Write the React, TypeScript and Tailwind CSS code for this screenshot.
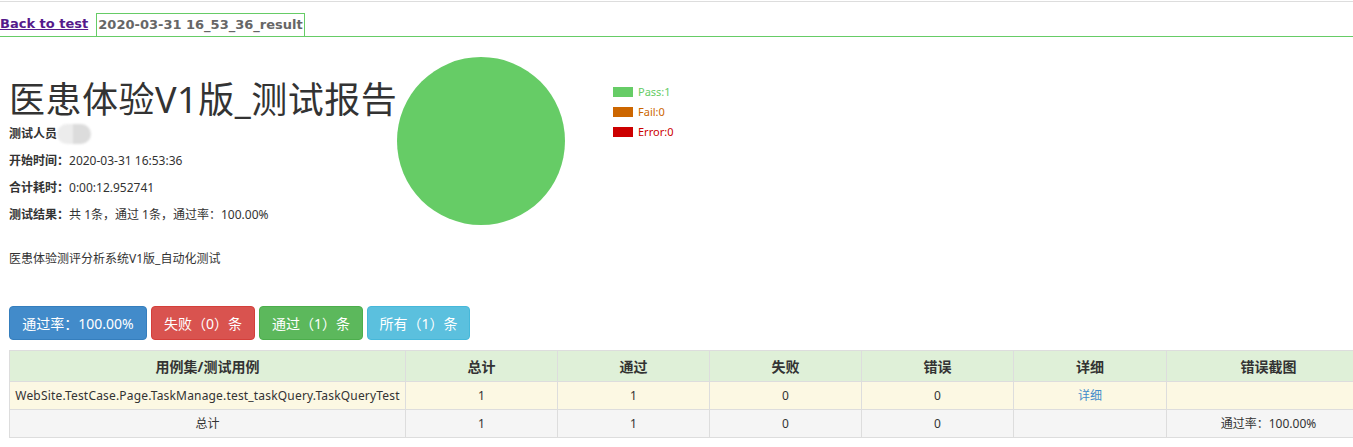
import React from "react";

const F = "font-['Noto_Sans','Noto_Sans_CJK_SC',sans-serif]";

export default function App() {
  const cols = [
    { t: "用例集/测试用例", w: "w-[396px]" },
    { t: "总计", w: "w-[152px]" },
    { t: "通过", w: "w-[152px]" },
    { t: "失败", w: "w-[152px]" },
    { t: "错误", w: "w-[152px]" },
    { t: "详细", w: "w-[153px]" },
    { t: "错误截图", w: "w-[204px]" },
  ];
  const td = "border border-[#dddddd] text-center text-[12px] text-[#333] h-[28px] p-0";
  return (
    <div className={`w-full overflow-hidden bg-white ${F}`}>
      <div className="h-px mt-px bg-[#dddddd]" />
      <div className="flex items-start h-[35px] border-b border-[#66cc66]">
        <div className="w-[96px] mt-[8px]">
          <a href="#" className="font-['DejaVu_Sans',sans-serif] font-bold text-[13px] leading-[16px] text-[#551a8b] underline whitespace-nowrap">
            Back to test
          </a>
        </div>
        <div className="mt-[11px] w-[209px] h-[23px] border border-b-0 border-[#66cc66] text-center font-['DejaVu_Sans',sans-serif] font-bold text-[13px] leading-[22px] text-[#666666] whitespace-nowrap overflow-hidden">
          2020-03-31 16_53_36_result
        </div>
      </div>

      <div className="flex items-start">
        <div className="w-[397px] shrink-0 pl-[9px] text-[#333]">
          <h1 className="mt-[42px] text-[36px] leading-[41px] tracking-[0.5px] whitespace-nowrap font-normal">医患体验V1版_测试报告</h1>
          <div className="h-[27px] flex items-center text-[12px]">
            <span className="font-bold">测试人员</span>
            <span className="flex w-[34px] h-[20px] rounded-full overflow-hidden blur-[1px]">
              <span className="w-[16px] h-full bg-[#ececec]" />
              <span className="w-[18px] h-full bg-[#dcdcdc]" />
            </span>
          </div>
          <div className="h-[27px] flex items-center text-[12px] whitespace-nowrap">
            <span className="font-bold">开始时间：</span>
            <span>2020-03-31 16:53:36</span>
          </div>
          <div className="h-[27px] flex items-center text-[12px] whitespace-nowrap">
            <span className="font-bold">合计耗时：</span>
            <span>0:00:12.952741</span>
          </div>
          <div className="h-[27px] flex items-center text-[12px] whitespace-nowrap">
            <span className="font-bold">测试结果：</span>
            <span>共 1条，通过 1条，通过率：100.00%</span>
          </div>
          <div className="mt-[17px] h-[27px] flex items-center text-[12px] whitespace-nowrap">
            医患体验测评分析系统V1版_自动化测试
          </div>
        </div>
        <svg className="mt-[20px] shrink-0" width="168" height="168" viewBox="0 0 168 168">
          <circle cx="84" cy="84" r="84" fill="#66cc66" />
        </svg>
        <div className="ml-[48px] mt-[45px] text-[11px]">
          <div className="h-[20px] flex items-center gap-[5px]">
            <span className="w-[20px] h-[10px] bg-[#66cc66]" />
            <span className="text-[#66cc66]">Pass:1</span>
          </div>
          <div className="h-[20px] flex items-center gap-[5px]">
            <span className="w-[20px] h-[10px] bg-[#cc6600]" />
            <span className="text-[#cc6600]">Fail:0</span>
          </div>
          <div className="h-[20px] flex items-center gap-[5px]">
            <span className="w-[20px] h-[10px] bg-[#cc0000]" />
            <span className="text-[#cc0000]">Error:0</span>
          </div>
        </div>
      </div>

      <div className="pl-[9px]">
        <div className="mt-[34px] flex gap-[4px] text-[14px] text-white">
          <button className="w-[138px] h-[34px] rounded-[4px] bg-[#428bca] border border-[#357ebd] whitespace-nowrap">通过率：100.00%</button>
          <button className="w-[104px] h-[34px] rounded-[4px] bg-[#d9534f] border border-[#d43f3a] whitespace-nowrap">失败（0）条</button>
          <button className="w-[104px] h-[34px] rounded-[4px] bg-[#5cb85c] border border-[#4cae4c] whitespace-nowrap">通过（1）条</button>
          <button className="w-[103px] h-[34px] rounded-[4px] bg-[#5bc0de] border border-[#46b8da] whitespace-nowrap">所有（1）条</button>
        </div>
        <table className="mt-[10px] w-[1361px] table-fixed border-collapse border border-[#dddddd]">
          <colgroup>
            {cols.map((c) => (
              <col key={c.t} className={c.w} />
            ))}
          </colgroup>
          <thead>
            <tr className="bg-[#dff0d8]">
              {cols.map((c) => (
                <th key={c.t} className="border border-[#dddddd] text-center text-[14px] font-bold text-[#333] h-[31px] p-0">
                  {c.t}
                </th>
              ))}
            </tr>
          </thead>
          <tbody>
            <tr className="bg-[#fcf8e3]">
              <td className={`${td} whitespace-nowrap tracking-[0.18px]`}>WebSite.TestCase.Page.TaskManage.test_taskQuery.TaskQueryTest</td>
              <td className={td}>1</td>
              <td className={td}>1</td>
              <td className={td}>0</td>
              <td className={td}>0</td>
              <td className={td}>
                <a href="#" className="text-[#428bca]">详细</a>
              </td>
              <td className={td}></td>
            </tr>
            <tr className="bg-[#f5f5f5]">
              <td className={td}>总计</td>
              <td className={td}>1</td>
              <td className={td}>1</td>
              <td className={td}>0</td>
              <td className={td}>0</td>
              <td className={td}></td>
              <td className={td}>通过率：100.00%</td>
            </tr>
          </tbody>
        </table>
      </div>
    </div>
  );
}
